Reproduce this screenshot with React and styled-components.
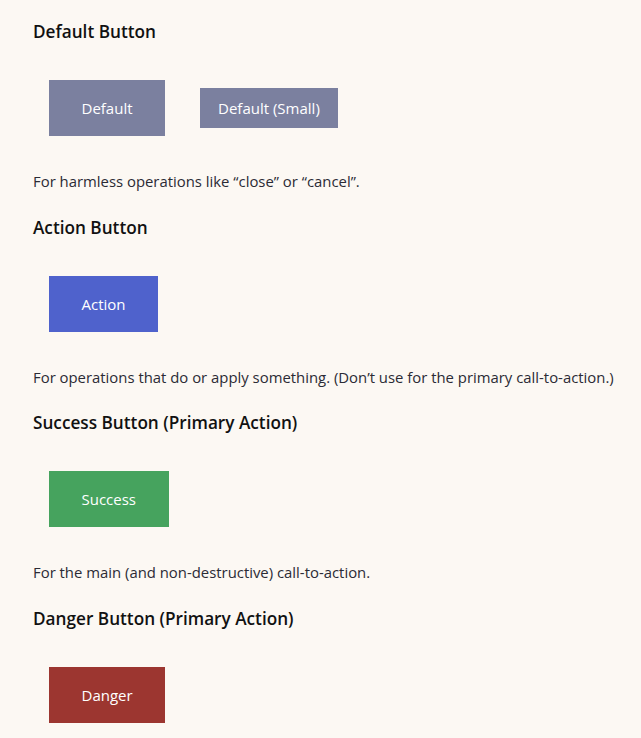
import React from "react";
import styled, { createGlobalStyle } from "styled-components";

const Global = createGlobalStyle`
  html, body { margin: 0; padding: 0; background: #fcf8f3; }
  body { font-family: "Open Sans", "Noto Sans", sans-serif; color: #222; }
`;

const Page = styled.div`
  padding: 19px 0 0 33px;
  display: flex;
  flex-direction: column;
  gap: 23.5px;
`;

const Section = styled.section`
  display: flex;
  flex-direction: column;
`;

const Heading = styled.h3`
  margin: 0;
  font-size: 17.2px;
  font-weight: 600;
  line-height: 26px;
  color: #111;
`;

const Row = styled.div`
  display: flex;
  align-items: center;
  gap: 35px;
  margin-top: 35px;
  padding: 0 16px;
  height: 56px;
`;

const colors = {
  default: "#7b809f",
  action: "#4f62cc",
  success: "#46a35e",
  danger: "#9c3630",
};

const Button = styled.button`
  border: none;
  border-radius: 0;
  background: ${(p) => colors[p.$variant]};
  color: #fff;
  font-family: inherit;
  font-size: 15px;
  height: ${(p) => (p.$small ? "40px" : "56px")};
  padding: 0 ${(p) => (p.$small ? "18px" : "32.5px")};
  cursor: pointer;
`;

const Text = styled.p`
  margin: 35px 0 0 0;
  font-size: 14.88px;
  line-height: 20px;
  color: #2b2b35;
  white-space: nowrap;
`;

export default function App() {
  return (
    <>
      <Global />
      <Page>
        <Section>
          <Heading>Default Button</Heading>
          <Row>
            <Button $variant="default">Default</Button>
            <Button $variant="default" $small>Default (Small)</Button>
          </Row>
          <Text>For harmless operations like “close” or “cancel”.</Text>
        </Section>
        <Section>
          <Heading>Action Button</Heading>
          <Row>
            <Button $variant="action">Action</Button>
          </Row>
          <Text>For operations that do or apply something. (Don’t use for the primary call-to-action.)</Text>
        </Section>
        <Section>
          <Heading>Success Button (Primary Action)</Heading>
          <Row>
            <Button $variant="success">Success</Button>
          </Row>
          <Text>For the main (and non-destructive) call-to-action.</Text>
        </Section>
        <Section>
          <Heading>Danger Button (Primary Action)</Heading>
          <Row>
            <Button $variant="danger">Danger</Button>
          </Row>
        </Section>
      </Page>
    </>
  );
}
